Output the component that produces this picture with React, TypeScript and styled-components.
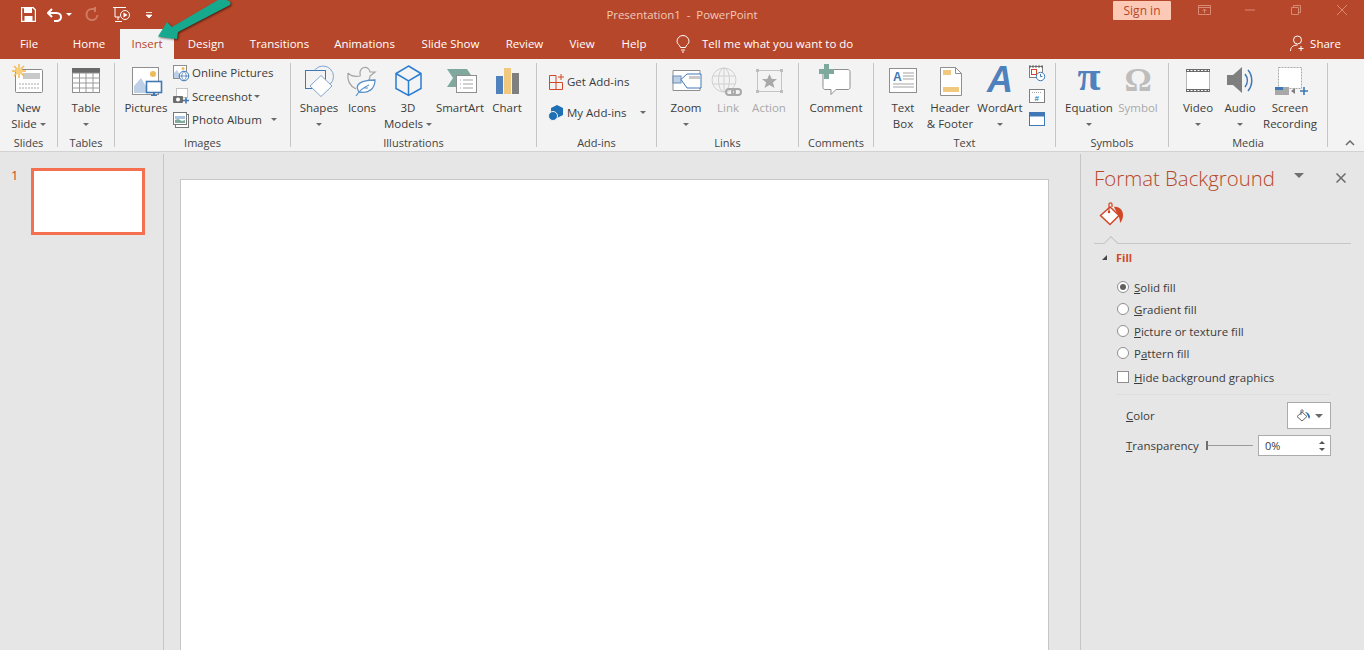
import { ReactNode } from "react";
import styled, { createGlobalStyle } from "styled-components";

const GlobalStyle = createGlobalStyle`
    html, body {
        margin: 0;
        padding: 0;
        background: #e6e6e6;
        overflow: hidden;
    }
    * {
        box-sizing: border-box;
    }
`;

const Page = styled.div`
    position: relative;
    width: 1364px;
    height: 650px;
    overflow: hidden;
    font-family: "Open Sans", "Noto Sans", sans-serif;
    font-size: 11.5px;
    color: #3b3b3b;
`;

const TitleBar = styled.header`
    display: grid;
    grid-template-columns: 1fr auto 1fr;
    align-items: center;
    height: 29px;
    background: #b7472a;
`;

const Qat = styled.div`
    display: flex;
    align-items: center;
    padding-left: 16px;
`;

const QatButton = styled.div<{ $w: number }>`
    width: ${(p) => p.$w}px;
    height: 24px;
    display: flex;
    align-items: center;
    justify-content: center;
    gap: 3px;
`;

const Title = styled.div`
    font-size: 11.4px;
    color: #f1c9bc;
    white-space: pre;
`;

const WindowControls = styled.div`
    display: flex;
    align-items: center;
    justify-content: flex-end;
    margin-right: -1px;
`;

const SignIn = styled.div`
    width: 58px;
    height: 19px;
    margin: -9px 10px 0 0;
    background: #fcc9b7;
    border-radius: 1px;
    color: #b7472a;
    font-size: 12px;
    line-height: 19px;
    text-align: center;
`;

const WindowButton = styled.div`
    width: 46px;
    height: 20px;
    margin-top: -9px;
    display: flex;
    align-items: center;
    justify-content: center;
`;

const TabRow = styled.nav`
    display: flex;
    align-items: stretch;
    height: 30px;
    background: #b7472a;
`;

const Tab = styled.div<{ $w: number; $active?: boolean }>`
    width: ${(p) => p.$w}px;
    line-height: 30px;
    text-align: center;
    font-size: 11.5px;
    color: ${(p) => (p.$active ? "#b7472a" : "#fff")};
    background: ${(p) => (p.$active ? "#f3f3f3" : "transparent")};
`;

const TellMe = styled.div`
    display: flex;
    align-items: center;
    gap: 11px;
    margin-left: 15px;
    padding-bottom: 1px;
    font-size: 11.5px;
    color: #fff;
`;

const Share = styled.div`
    display: flex;
    align-items: center;
    gap: 4px;
    margin-left: auto;
    padding: 0 23px 1px 0;
    font-size: 11.5px;
    color: #fff;
`;

const Ribbon = styled.div`
    display: flex;
    height: 93px;
    background: #f3f3f3;
    border-bottom: 1px solid #d2d2d2;
`;

const Group = styled.section<{ $w: number }>`
    width: ${(p) => p.$w}px;
    flex: none;
    display: flex;
    flex-direction: column;
`;

const GroupBody = styled.div<{ $pl?: number }>`
    height: 76px;
    display: flex;
    padding-left: ${(p) => p.$pl ?? 0}px;
`;

const GroupLabel = styled.div`
    height: 16px;
    line-height: 16px;
    text-align: center;
    font-size: 11px;
    color: #444;
`;

const Separator = styled.div`
    width: 1px;
    flex: none;
    margin: 4px 0 4px;
    background: #c6c6c6;
`;

const Tool = styled.div<{ $w: number; $disabled?: boolean }>`
    width: ${(p) => p.$w}px;
    flex: none;
    padding-top: 2px;
    display: flex;
    flex-direction: column;
    align-items: center;
    color: ${(p) => (p.$disabled ? "#a9a9a9" : "#3b3b3b")};

    svg {
        display: block;
        flex: none;
        margin-bottom: 1px;
    }
`;

const ToolLine = styled.div`
    height: 16px;
    line-height: 16px;
    white-space: nowrap;
    display: flex;
    align-items: center;
    gap: 3px;
`;

const GlyphIcon = styled.div<{ $color: string; $size: number; $family: string; $lh?: number; $italic?: boolean }>`
    width: 40px;
    height: 38px;
    margin-bottom: 1px;
    flex: none;
    text-align: center;
    line-height: ${(p) => p.$lh ?? 38}px;
    font-family: ${(p) => p.$family}, serif;
    font-size: ${(p) => p.$size}px;
    font-weight: 700;
    font-style: ${(p) => (p.$italic ? "italic" : "normal")};
    color: ${(p) => p.$color};
`;

const Caret = styled.span<{ $dark?: boolean }>`
    display: inline-block;
    width: 0;
    height: 0;
    border-left: 3px solid transparent;
    border-right: 3px solid transparent;
    border-top: 3px solid ${(p) => (p.$dark ? "#fff" : "#6a6a6a")};
`;

const SmallList = styled.div`
    margin: 2px 0 0 2px;
    display: flex;
    flex-direction: column;
`;

const SmallRow = styled.div`
    height: 23.5px;
    display: flex;
    align-items: center;
    gap: 2px;
    white-space: nowrap;

    svg {
        flex: none;
    }
`;

const RowCaret = styled(Caret)`
    margin-left: 7px;
`;

const AddinList = styled.div`
    width: 98px;
    padding-top: 7px;
    display: flex;
    flex-direction: column;
`;

const AddinRow = styled.div`
    height: 31px;
    display: flex;
    align-items: center;
    gap: 1px;
    white-space: nowrap;

    ${Caret} {
        margin-left: auto;
    }
`;

const SmallColumn = styled.div`
    width: 30px;
    padding-top: 5px;
    display: flex;
    flex-direction: column;
    align-items: center;
    gap: 5px;
`;

const Collapse = styled.div`
    flex: 1;
    display: flex;
    align-items: flex-end;
    justify-content: flex-end;
    padding: 0 9px 5px 0;
`;

const Workspace = styled.main`
    display: flex;
    height: 498px;
    background: #e6e6e6;
`;

const ThumbPane = styled.aside`
    width: 164px;
    flex: none;
    margin-top: 2px;
    padding: 13px 0 0 12px;
    display: flex;
    gap: 15px;
    align-items: flex-start;
    border-right: 1px solid #c6c6c6;
`;

const ThumbNumber = styled.span`
    line-height: 16px;
    font-size: 13px;
    color: #d24726;
    width: 4px;
    margin-left: -1px;
    margin-right: 1px;
`;

const Thumb = styled.div`
    width: 114px;
    height: 67px;
    margin-top: 1px;
    background: #fff;
    border: 3px solid #f4704e;
`;

const SlideArea = styled.div`
    flex: 1;
    padding: 27px 0 0 16px;
`;

const Slide = styled.div`
    width: 869px;
    height: 600px;
    background: #fff;
    border: 1px solid #c6c6c6;
`;

const Panel = styled.aside`
    width: 284px;
    flex: none;
    margin-top: 2px;
    padding-left: 13px;
    border-left: 1px solid #c6c6c6;
`;

const PanelHeader = styled.div`
    display: flex;
    align-items: center;
    height: 30px;
    margin-top: 9px;
    padding-right: 18px;
`;

const PanelTitle = styled.h2`
    flex: 1;
    margin: 0;
    font-size: 20.4px;
    font-weight: 300;
    color: #b7472a;
    white-space: nowrap;
`;

const PanelCaret = styled.span`
    width: 0;
    height: 0;
    margin: -6px 32px 0 0;
    border-left: 5px solid transparent;
    border-right: 5px solid transparent;
    border-top: 5px solid #6f6f6f;
`;

const PanelIcon = styled.div`
    height: 24px;
    margin: 9px 0 0 5px;
`;

const TabRule = styled.div`
    position: relative;
    width: 257px;
    height: 1px;
    margin-top: 17px;
    background: #c6c6c6;

    &::after {
        content: "";
        position: absolute;
        left: 12px;
        top: -5px;
        width: 9px;
        height: 9px;
        background: #e6e6e6;
        border-left: 1px solid #c6c6c6;
        border-top: 1px solid #c6c6c6;
        transform: rotate(45deg);
    }
`;

const SectionHead = styled.div`
    display: flex;
    align-items: center;
    gap: 9px;
    height: 16px;
    margin: 5px 0 11px 8px;
    font-weight: 700;
    font-size: 11px;
    color: #d24726;
`;

const Corner = styled.span`
    width: 0;
    height: 0;
    border-left: 5px solid transparent;
    border-bottom: 5px solid #444;
`;

const Option = styled.label`
    display: flex;
    align-items: center;
    gap: 5px;
    height: 22px;
    padding-left: 23px;
`;

const Radio = styled.span<{ $on?: boolean }>`
    width: 12px;
    height: 12px;
    flex: none;
    display: flex;
    align-items: center;
    justify-content: center;
    border-radius: 50%;
    border: 1px solid #8f8f8f;
    background: #fff;

    &::after {
        content: "";
        width: 6px;
        height: 6px;
        border-radius: 50%;
        background: ${(p) => (p.$on ? "#606060" : "transparent")};
    }
`;

const CheckBox = styled.span`
    width: 12px;
    height: 12px;
    flex: none;
    border: 1px solid #8f8f8f;
    background: #fff;
`;

const CheckOption = styled(Option)`
    margin-top: 2px;
`;

const PanelDivider = styled.div`
    width: 214px;
    height: 1px;
    margin: 6px 0 7px 22px;
    background: #dedede;
`;

const FieldRow = styled.div<{ $h: number }>`
    display: flex;
    align-items: center;
    justify-content: space-between;
    width: 237px;
    height: ${(p) => p.$h}px;
    margin-bottom: 6px;
    padding-left: 32px;
`;

const ColorButton = styled.div`
    width: 44px;
    height: 27px;
    display: flex;
    align-items: center;
    justify-content: center;
    gap: 3px;
    background: #fff;
    border: 1px solid #ababab;
`;

const ColorCaret = styled.span`
    width: 0;
    height: 0;
    border-left: 4px solid transparent;
    border-right: 4px solid transparent;
    border-top: 4px solid #6a6a6a;
`;

const Slider = styled.div`
    position: relative;
    width: 47px;
    height: 1px;
    margin-left: 2px;
    background: #9b9b9b;

    &::before {
        content: "";
        position: absolute;
        left: 0;
        top: -4px;
        width: 2px;
        height: 9px;
        background: #6f6f6f;
    }
`;

const NumberField = styled.div`
    width: 73px;
    height: 21px;
    display: flex;
    align-items: center;
    justify-content: space-between;
    padding: 0 5px 0 6px;
    background: #fff;
    border: 1px solid #ababab;
    font-size: 11px;
`;

const Spinner = styled.div`
    display: flex;
    flex-direction: column;
    gap: 4px;
`;

const SpinUp = styled.span`
    display: block;
    width: 0;
    height: 0;
    border-left: 3px solid transparent;
    border-right: 3px solid transparent;
    border-bottom: 3px solid #555;
`;

const SpinDown = styled(SpinUp)`
    border-bottom: 0;
    border-top: 3px solid #555;
`;

const ArrowOverlay = styled.svg`
    position: absolute;
    left: 0;
    top: 0;
    pointer-events: none;
    filter: drop-shadow(1px 1px 1px rgba(0, 0, 0, 0.6));
`;

// every big ribbon icon shares one 40x38 box so it lines up over its label
function Big({ children }: { children: ReactNode }) {
    return (
        <svg width="40" height="38" viewBox="0 0 40 38">
            {children}
        </svg>
    );
}

function Small({ children }: { children: ReactNode }) {
    return (
        <svg width="18" height="18" viewBox="0 0 18 18">
            {children}
        </svg>
    );
}

const NewSlideIcon = () => (
    <Big>
        <rect x="6.5" y="8.5" width="27" height="23" rx="1" fill="#fff" stroke="#8a8a8a" />
        <rect x="14" y="12" width="17" height="6" fill="#c9c9c9" />
        <path d="M10 23h21M10 27h21" stroke="#a8a8a8" strokeDasharray="2 1" />
        <g stroke="#f3b54a" strokeWidth="1.4">
            <path d="M10 3v14M3 10h14M5 5l10 10M15 5L5 15" />
        </g>
        <circle cx="10" cy="10" r="3.6" fill="#f8cf7a" />
    </Big>
);

const TableIcon = () => (
    <Big>
        <rect x="6" y="7" width="28" height="5" fill="#6a6a6a" />
        <rect x="6.5" y="12" width="27" height="19.5" fill="#fff" stroke="#8f8f8f" />
        <path d="M6 17h28M6 22h28M6 27h28M13.5 12v20M20 12v20M27 12v20" stroke="#9a9a9a" />
    </Big>
);

const PicturesIcon = () => (
    <Big>
        <rect x="6.5" y="6.5" width="26" height="27" fill="#fff" stroke="#8f8f8f" />
        <circle cx="27" cy="13" r="3" fill="#f0b95a" />
        <path d="M8 32V25l7-8 9 15z" fill="#bdd0e6" />
        <rect x="20.5" y="20.5" width="15" height="11" fill="#fff" stroke="#3f78b5" strokeWidth="1.6" />
        <path d="M27 32h2v2h2v1h-6v-1h2z" fill="#3f78b5" />
    </Big>
);

const OnlinePicturesIcon = () => (
    <Small>
        <rect x="1.5" y="1.5" width="13" height="13" fill="#fff" stroke="#8f8f8f" />
        <path d="M2 14V9l3-3 5 8z" fill="#bdd0e6" />
        <circle cx="11" cy="4.5" r="1.5" fill="#f0b95a" />
        <circle cx="12" cy="12" r="4.8" fill="#fff" stroke="#3f78b5" />
        <path d="M7.5 12h9M12 7.5c-3 3-3 6 0 9M12 7.5c3 3 3 6 0 9" stroke="#3f78b5" fill="none" strokeWidth=".8" />
    </Small>
);

const ScreenshotIcon = () => (
    <Small>
        <rect x="4.5" y="1.5" width="11" height="9" fill="#fff" stroke="#8f8f8f" strokeDasharray="1 1" />
        <rect x="1" y="9" width="10" height="7" rx="1" fill="#6d6d6d" />
        <circle cx="6" cy="12.5" r="2" fill="#fff" />
        <path d="M14 10.5v6M11 13.5h6" stroke="#3f78b5" strokeWidth="1.6" />
    </Small>
);

const PhotoAlbumIcon = () => (
    <Small>
        <rect x="3.5" y="3.5" width="13" height="13" fill="#fff" stroke="#777" />
        <rect x="1.5" y="1.5" width="13" height="12" fill="#fff" stroke="#777" />
        <path d="M3 5h10v3H3z" fill="#a7c3df" />
        <path d="M3 12V9l3-1 4 2 3-1v3z" fill="#7ea99c" />
    </Small>
);

const ShapesIcon = () => (
    <Big>
        <circle cx="24" cy="15.5" r="10.5" fill="#f3f3f3" stroke="#7fa6d2" />
        <rect x="6.5" y="9.5" width="20" height="18" fill="#f3f3f3" stroke="#3f78b5" />
        <path d="M22 14.5l11 10.5-11 10.5-11-10.5z" fill="#fff" stroke="#7fa6d2" />
    </Big>
);

const IconsIcon = () => (
    <Big>
        <path
            d="M6 12c3 3 7 4 12 3 .5-1 0-2 0-3a5 5 0 0 1 10-1l5 0-5 4c0 2-1 4-2 5M6 12c-1 7 2 13 8 16"
            fill="none"
            stroke="#a3a3a3"
            strokeWidth="1.2"
        />
        <path d="M17 31C12 24 18 19 33 19 33 28 26 33 17 31z" fill="#fff" stroke="#5b93c9" strokeWidth="1.3" />
        <path d="M14 35C18 29 22 26 27 24M21 27h5" fill="none" stroke="#5b93c9" strokeWidth="1.2" />
    </Big>
);

const ModelsIcon = () => (
    <Big>
        <path
            d="M20.5 5L33 12.5v15L20.5 34.5 8 27.5v-15zM8 12.5L20.5 20 33 12.5M20.5 20v15"
            fill="none"
            stroke="#2b7cd3"
            strokeWidth="1.5"
        />
    </Big>
);

const SmartArtIcon = () => (
    <Big>
        <path d="M7 8h20l6 9-8 9H7l6-9z" fill="#7ea99c" />
        <rect x="16.5" y="14.5" width="20" height="17" fill="#fff" stroke="#8f8f8f" />
        <path d="M20 19h1M23 19h10M20 23h1M23 23h10M20 27h1M23 27h10" stroke="#a3a3a3" />
    </Big>
);

const ChartIcon = () => (
    <Big>
        <rect x="9" y="15" width="7" height="18" fill="#4f81bd" />
        <rect x="17" y="7" width="7" height="26" fill="#f0c97f" />
        <rect x="25" y="12" width="7" height="21" fill="#7f7f7f" />
    </Big>
);

const ZoomIcon = () => (
    <Big>
        <path d="M7 9.5h27v20H7z" fill="#fff" stroke="#8f8f8f" />
        <rect x="7" y="15" width="8" height="7" fill="#bdd0e6" stroke="#6c8fb5" />
        <path d="M15 18.5l6-5.5h14v14H21z" fill="#fff" stroke="#3f78b5" />
        <rect x="23" y="15" width="11" height="3" fill="#c9c9c9" />
    </Big>
);

const LinkIcon = () => (
    <Big>
        <g fill="none" stroke="#cfcfcf">
            <circle cx="16" cy="19" r="12" />
            <ellipse cx="16" cy="19" rx="5.5" ry="12" />
            <path d="M16 7v24M5 15h22M5 23h22" />
        </g>
        <g fill="none" stroke="#a8a8a8" strokeWidth="2">
            <rect x="18" y="28" width="9" height="6" rx="3" />
            <rect x="24" y="28" width="9" height="6" rx="3" />
        </g>
    </Big>
);

const ActionIcon = () => (
    <Big>
        <rect x="8.5" y="9.5" width="24" height="21" fill="none" stroke="#c4c4c4" />
        <path d="M7 8h3v3H7zM31 8h3v3h-3zM7 29h3v3H7zM31 29h3v3h-3z" fill="#bdbdbd" />
        <path d="M20.5 13l2.3 5H28l-4.1 3.5 1.6 5.5-5-3-5 3 1.6-5.5L13 18h5.2z" fill="#a9a9a9" />
    </Big>
);

const CommentIcon = () => (
    <Big>
        <path
            d="M9 8.5h23c1 0 2 1 2 2v16c0 1-1 2-2 2H20l-5 5v-5H9c-1 0-2-1-2-2v-16c0-1 1-2 2-2z"
            fill="#fff"
            stroke="#8f8f8f"
        />
        <path d="M8 3h5v5h5v5h-5v5H8v-5H3V8h5z" fill="#7ea99c" />
    </Big>
);

const TextBoxIcon = () => (
    <Big>
        <rect x="6.5" y="7.5" width="27" height="24" fill="#fff" stroke="#8f8f8f" />
        <text x="10" y="20" fontFamily="Liberation Sans" fontSize="12" fontWeight="700" fill="#3f78b5">
            A
        </text>
        <path d="M20 12h11M20 15h11M20 18h11M10 23h21M10 26h21" stroke="#a3a3a3" />
    </Big>
);

const HeaderFooterIcon = () => (
    <Big>
        <path d="M10.5 6.5h15l6 6v22h-21z" fill="#fff" stroke="#8f8f8f" />
        <path d="M25.5 6.5v6h6" fill="none" stroke="#8f8f8f" />
        <rect x="13" y="9" width="8" height="5" fill="#f0c97f" />
        <rect x="13" y="26" width="16" height="5" fill="#f0c97f" />
    </Big>
);

const DateTimeIcon = () => (
    <Small>
        <rect x="1.5" y="2.5" width="13" height="11" fill="#fff" stroke="#7f7f7f" />
        <path d="M1 2.5h14" stroke="#6a6a6a" strokeWidth="2" strokeDasharray="2 1" />
        <rect x="3.5" y="5.5" width="5" height="5" fill="none" stroke="#d24726" />
        <circle cx="12.5" cy="12.5" r="4.2" fill="#fff" stroke="#3f78b5" />
        <path d="M12.5 10v2.5h2" fill="none" stroke="#3f78b5" />
    </Small>
);

const SlideNumberIcon = () => (
    <Small>
        <rect x="1.5" y="2.5" width="15" height="13" fill="#fff" stroke="#7f7f7f" />
        <path d="M4 5.5h10" stroke="#a8a8a8" strokeDasharray="1 1" />
        <text x="6.5" y="13.5" fontFamily="Liberation Sans" fontSize="8" fontWeight="700" fill="#3f78b5">
            #
        </text>
    </Small>
);

const ObjectIcon = () => (
    <Small>
        <rect x="1.5" y="2.5" width="15" height="13" fill="#fff" stroke="#3f78b5" />
        <rect x="1" y="2" width="16" height="4.5" fill="#3f78b5" />
    </Small>
);

const VideoIcon = () => (
    <Big>
        <rect x="8" y="8" width="24" height="23" fill="#6a6a6a" />
        <rect x="8.5" y="11" width="23" height="17" fill="#fff" />
        <path d="M9 9.5h22M9 29.5h22" stroke="#fff" strokeDasharray="2 1.5" />
    </Big>
);

const AudioIcon = () => (
    <Big>
        <path d="M7 14h6l9-8v26l-9-8H7z" fill="#7f7f7f" />
        <path d="M25 13c3 4 3 9 0 13M28 9c5 6 5 15 0 21" fill="none" stroke="#3f78b5" strokeWidth="1.5" />
    </Big>
);

const ScreenRecordingIcon = () => (
    <Big>
        <rect x="8.5" y="6.5" width="23" height="21" fill="#fff" stroke="#a8a8a8" strokeDasharray="2 1" />
        <rect x="5" y="26" width="14" height="8" fill="#a8a8a8" />
        <rect x="5" y="26" width="8" height="3" fill="#3f78b5" />
        <path d="M21 30l4-3v6zM27 30h1" fill="#7f7f7f" />
        <path d="M34 26v8M30 30h8" stroke="#3f78b5" strokeWidth="1.6" />
    </Big>
);

const GetAddinsIcon = () => (
    <Small>
        <path d="M1.5 2.5H8v7h6.5v7h-13zM1.5 9.5H8v7" fill="none" stroke="#d24726" />
        <path d="M13 1v6M10 4h6" stroke="#d24726" />
    </Small>
);

const MyAddinsIcon = () => (
    <Small>
        <path d="M9 1l6 3v7l-6 3-6-3V4z" fill="#1f6fb5" />
        <circle cx="5" cy="12" r="4.5" fill="#1f6fb5" stroke="#f3f3f3" />
    </Small>
);

const PaintBucket = () => (
    <svg width="26" height="24" viewBox="0 0 26 24">
        <path d="M11 5L1.5 13.5 11 22.5l9-9z" fill="#fff" stroke="#d24726" strokeWidth="1.5" />
        <path d="M10 10V2c0-1.500 3-1.500 3 0v3" fill="none" stroke="#d24726" strokeWidth="1.2" />
        <circle cx="10" cy="10" r="1.3" fill="#d24726" />
        <path d="M15 5c5-1 9 3 9 8 0 3-1 6-3 8 0-4-1-7-3-10z" fill="#d24726" />
    </svg>
);

const SmallBucket = () => (
    <svg width="16" height="14" viewBox="0 0 16 14">
        <path d="M6 3L1 7.5 6 12l5-4.5z" fill="#fff" stroke="#666" />
        <path d="M5 6V1.500c0-1 2-1 2 0V3" fill="none" stroke="#666" />
        <path d="M9 3c3 0 5 3 5 5l-1 2-2-5z" fill="#2b6cb0" />
    </svg>
);

function App() {
    return (
        <Page>
            <GlobalStyle />
            <TitleBar>
                <Qat>
                    <QatButton $w={24}>
                        <svg width="15" height="15" viewBox="0 0 15 15">
                            <path d="M.5.5H12L14.5 3v11.5H.5z" fill="none" stroke="#fff" strokeWidth="1.4" />
                            <rect x="3" y="1" width="8" height="5" fill="#fff" />
                            <rect x="3.5" y="9" width="8" height="5" fill="#fff" />
                        </svg>
                    </QatButton>
                    <QatButton $w={38}>
                        <svg width="16" height="14" viewBox="0 0 16 14">
                            <path d="M5 1L1 5l4 4M1.5 5h8c6 0 6 8 0 8H7" fill="none" stroke="#fff" strokeWidth="2" />
                        </svg>
                        <Caret $dark />
                    </QatButton>
                    <QatButton $w={28}>
                        <svg width="14" height="15" viewBox="0 0 14 15">
                            <path d="M10 2H7a5.5 5.5 0 1 0 5.5 6M10 0v5" fill="none" stroke="#cf7a62" strokeWidth="2" />
                        </svg>
                    </QatButton>
                    <QatButton $w={32}>
                        <svg width="18" height="17" viewBox="0 0 18 17">
                            <path d="M0 1.5h13M2 2v9h5M5 11v3M2 15.5h7" fill="none" stroke="#fff" />
                            <circle cx="12" cy="9" r="4.5" fill="none" stroke="#fff" />
                            <path d="M10.5 6.5l4 2.5-4 2.5z" fill="#fff" />
                        </svg>
                    </QatButton>
                    <QatButton $w={22}>
                        <svg width="8" height="8" viewBox="0 0 8 8">
                            <path d="M1 1.5h6M1 4h6L4 7z" fill="#fff" stroke="#fff" strokeWidth=".8" />
                        </svg>
                    </QatButton>
                </Qat>
                <Title>Presentation1  -  PowerPoint</Title>
                <WindowControls>
                    <SignIn>Sign in</SignIn>
                    <WindowButton>
                        <svg width="13" height="10" viewBox="0 0 13 10">
                            <path d="M.5.5h12v9H.5zM.5 2.5h12M6.5 8V4M4.5 6l2-2 2 2" fill="none" stroke="#d98a72" />
                        </svg>
                    </WindowButton>
                    <WindowButton>
                        <svg width="10" height="2" viewBox="0 0 10 2">
                            <path d="M0 1h10" stroke="#d98a72" />
                        </svg>
                    </WindowButton>
                    <WindowButton>
                        <svg width="10" height="10" viewBox="0 0 10 10">
                            <path d="M.5 2.5h7v7h-7zM2.5 2.5V.5h7v7h-2" fill="none" stroke="#d98a72" />
                        </svg>
                    </WindowButton>
                    <WindowButton>
                        <svg width="10" height="10" viewBox="0 0 10 10">
                            <path d="M0 0l10 10M10 0L0 10" stroke="#d98a72" />
                        </svg>
                    </WindowButton>
                </WindowControls>
            </TitleBar>

            <TabRow>
                <Tab $w={58}>File</Tab>
                <Tab $w={62}>Home</Tab>
                <Tab $w={54} $active>Insert</Tab>
                <Tab $w={64}>Design</Tab>
                <Tab $w={83}>Transitions</Tab>
                <Tab $w={87}>Animations</Tab>
                <Tab $w={85}>Slide Show</Tab>
                <Tab $w={63}>Review</Tab>
                <Tab $w={52}>View</Tab>
                <Tab $w={52}>Help</Tab>
                <TellMe>
                    <svg width="16" height="18" viewBox="0 0 16 18">
                        <path
                            d="M5.5 12.5C5 10 2 9 2 6.5a6 6 0 0 1 12 0c0 2.500-3 3.500-3.500 6zM6 15h4M7 17h2"
                            fill="none"
                            stroke="#fff"
                        />
                    </svg>
                    Tell me what you want to do
                </TellMe>
                <Share>
                    <svg width="16" height="17" viewBox="0 0 16 17">
                        <circle cx="7.5" cy="5" r="4" fill="none" stroke="#fff" />
                        <path d="M.5 16c0-4 3-6 7-6M11 11v5M8.5 13.5h5" fill="none" stroke="#fff" />
                    </svg>
                    Share
                </Share>
            </TabRow>

            <Ribbon>
                <Group $w={57}>
                    <GroupBody>
                        <Tool $w={57}>
                            <NewSlideIcon />
                            <ToolLine>New</ToolLine>
                            <ToolLine>Slide <Caret /></ToolLine>
                        </Tool>
                    </GroupBody>
                    <GroupLabel>Slides</GroupLabel>
                </Group>
                <Separator />
                <Group $w={56}>
                    <GroupBody>
                        <Tool $w={56}>
                            <TableIcon />
                            <ToolLine>Table</ToolLine>
                            <ToolLine><Caret /></ToolLine>
                        </Tool>
                    </GroupBody>
                    <GroupLabel>Tables</GroupLabel>
                </Group>
                <Separator />
                <Group $w={175}>
                    <GroupBody $pl={7}>
                        <Tool $w={48}>
                            <PicturesIcon />
                            <ToolLine>Pictures</ToolLine>
                        </Tool>
                        <SmallList>
                            <SmallRow><OnlinePicturesIcon />Online Pictures</SmallRow>
                            <SmallRow><ScreenshotIcon />Screenshot <Caret /></SmallRow>
                            <SmallRow><PhotoAlbumIcon />Photo Album<RowCaret /></SmallRow>
                        </SmallList>
                    </GroupBody>
                    <GroupLabel>Images</GroupLabel>
                </Group>
                <Separator />
                <Group $w={245}>
                    <GroupBody $pl={7}>
                        <Tool $w={42}>
                            <ShapesIcon />
                            <ToolLine>Shapes</ToolLine>
                            <ToolLine><Caret /></ToolLine>
                        </Tool>
                        <Tool $w={44}>
                            <IconsIcon />
                            <ToolLine>Icons</ToolLine>
                        </Tool>
                        <Tool $w={48}>
                            <ModelsIcon />
                            <ToolLine>3D</ToolLine>
                            <ToolLine>Models <Caret /></ToolLine>
                        </Tool>
                        <Tool $w={56}>
                            <SmartArtIcon />
                            <ToolLine>SmartArt</ToolLine>
                        </Tool>
                        <Tool $w={38}>
                            <ChartIcon />
                            <ToolLine>Chart</ToolLine>
                        </Tool>
                    </GroupBody>
                    <GroupLabel>Illustrations</GroupLabel>
                </Group>
                <Separator />
                <Group $w={119}>
                    <GroupBody $pl={11}>
                        <AddinList>
                            <AddinRow><GetAddinsIcon />Get Add-ins</AddinRow>
                            <AddinRow><MyAddinsIcon />My Add-ins<Caret /></AddinRow>
                        </AddinList>
                    </GroupBody>
                    <GroupLabel>Add-ins</GroupLabel>
                </Group>
                <Separator />
                <Group $w={141}>
                    <GroupBody $pl={9}>
                        <Tool $w={40}>
                            <ZoomIcon />
                            <ToolLine>Zoom</ToolLine>
                            <ToolLine><Caret /></ToolLine>
                        </Tool>
                        <Tool $w={44} $disabled>
                            <LinkIcon />
                            <ToolLine>Link</ToolLine>
                        </Tool>
                        <Tool $w={38} $disabled>
                            <ActionIcon />
                            <ToolLine>Action</ToolLine>
                        </Tool>
                    </GroupBody>
                    <GroupLabel>Links</GroupLabel>
                </Group>
                <Separator />
                <Group $w={74}>
                    <GroupBody>
                        <Tool $w={74}>
                            <CommentIcon />
                            <ToolLine>Comment</ToolLine>
                        </Tool>
                    </GroupBody>
                    <GroupLabel>Comments</GroupLabel>
                </Group>
                <Separator />
                <Group $w={181}>
                    <GroupBody $pl={10}>
                        <Tool $w={38}>
                            <TextBoxIcon />
                            <ToolLine>Text</ToolLine>
                            <ToolLine>Box</ToolLine>
                        </Tool>
                        <Tool $w={56}>
                            <HeaderFooterIcon />
                            <ToolLine>Header</ToolLine>
                            <ToolLine>&amp; Footer</ToolLine>
                        </Tool>
                        <Tool $w={44}>
                            <GlyphIcon $color="#4f81bd" $size={36} $family='"Liberation Sans"' $italic>A</GlyphIcon>
                            <ToolLine>WordArt</ToolLine>
                            <ToolLine><Caret /></ToolLine>
                        </Tool>
                        <SmallColumn>
                            <DateTimeIcon />
                            <SlideNumberIcon />
                            <ObjectIcon />
                        </SmallColumn>
                    </GroupBody>
                    <GroupLabel>Text</GroupLabel>
                </Group>
                <Separator />
                <Group $w={112}>
                    <GroupBody $pl={6}>
                        <Tool $w={54}>
                            <GlyphIcon $color="#4f81bd" $size={42} $lh={31} $family='"Liberation Serif"'>π</GlyphIcon>
                            <ToolLine>Equation</ToolLine>
                            <ToolLine><Caret /></ToolLine>
                        </Tool>
                        <Tool $w={44} $disabled>
                            <GlyphIcon $color="#bdbdbd" $size={34} $family='"Liberation Serif"'>Ω</GlyphIcon>
                            <ToolLine>Symbol</ToolLine>
                        </Tool>
                    </GroupBody>
                    <GroupLabel>Symbols</GroupLabel>
                </Group>
                <Separator />
                <Group $w={158}>
                    <GroupBody $pl={9}>
                        <Tool $w={40}>
                            <VideoIcon />
                            <ToolLine>Video</ToolLine>
                            <ToolLine><Caret /></ToolLine>
                        </Tool>
                        <Tool $w={44}>
                            <AudioIcon />
                            <ToolLine>Audio</ToolLine>
                            <ToolLine><Caret /></ToolLine>
                        </Tool>
                        <Tool $w={56}>
                            <ScreenRecordingIcon />
                            <ToolLine>Screen</ToolLine>
                            <ToolLine>Recording</ToolLine>
                        </Tool>
                    </GroupBody>
                    <GroupLabel>Media</GroupLabel>
                </Group>
                <Separator />
                <Collapse>
                    <svg width="10" height="6" viewBox="0 0 10 6">
                        <path d="M1 5l4-4 4 4" fill="none" stroke="#6a6a6a" strokeWidth="1.5" />
                    </svg>
                </Collapse>
            </Ribbon>

            <Workspace>
                <ThumbPane>
                    <ThumbNumber>1</ThumbNumber>
                    <Thumb />
                </ThumbPane>
                <SlideArea>
                    <Slide />
                </SlideArea>
                <Panel>
                    <PanelHeader>
                        <PanelTitle>Format Background</PanelTitle>
                        <PanelCaret />
                        <svg width="10" height="10" viewBox="0 0 10 10">
                            <path d="M.5.5l9 9M9.5.5l-9 9" stroke="#6a6a6a" strokeWidth="1.5" />
                        </svg>
                    </PanelHeader>
                    <PanelIcon>
                        <PaintBucket />
                    </PanelIcon>
                    <TabRule />
                    <SectionHead>
                        <Corner />
                        Fill
                    </SectionHead>
                    <Option><Radio $on /><span><u>S</u>olid fill</span></Option>
                    <Option><Radio /><span><u>G</u>radient fill</span></Option>
                    <Option><Radio /><span><u>P</u>icture or texture fill</span></Option>
                    <Option><Radio /><span>P<u>a</u>ttern fill</span></Option>
                    <CheckOption><CheckBox /><span><u>H</u>ide background graphics</span></CheckOption>
                    <PanelDivider />
                    <FieldRow $h={27}>
                        <span><u>C</u>olor</span>
                        <ColorButton>
                            <SmallBucket />
                            <ColorCaret />
                        </ColorButton>
                    </FieldRow>
                    <FieldRow $h={21}>
                        <span><u>T</u>ransparency</span>
                        <Slider />
                        <NumberField>
                            0%
                            <Spinner>
                                <SpinUp />
                                <SpinDown />
                            </Spinner>
                        </NumberField>
                    </FieldRow>
                </Panel>
            </Workspace>

            <ArrowOverlay width="240" height="45" viewBox="0 0 240 45">
                <path d="M158 36.5L167 22l5 5L218 0h8q6 1 4 5L178 32l-1 7z" fill="#17a98d" />
            </ArrowOverlay>
        </Page>
    );
}

export default App;
